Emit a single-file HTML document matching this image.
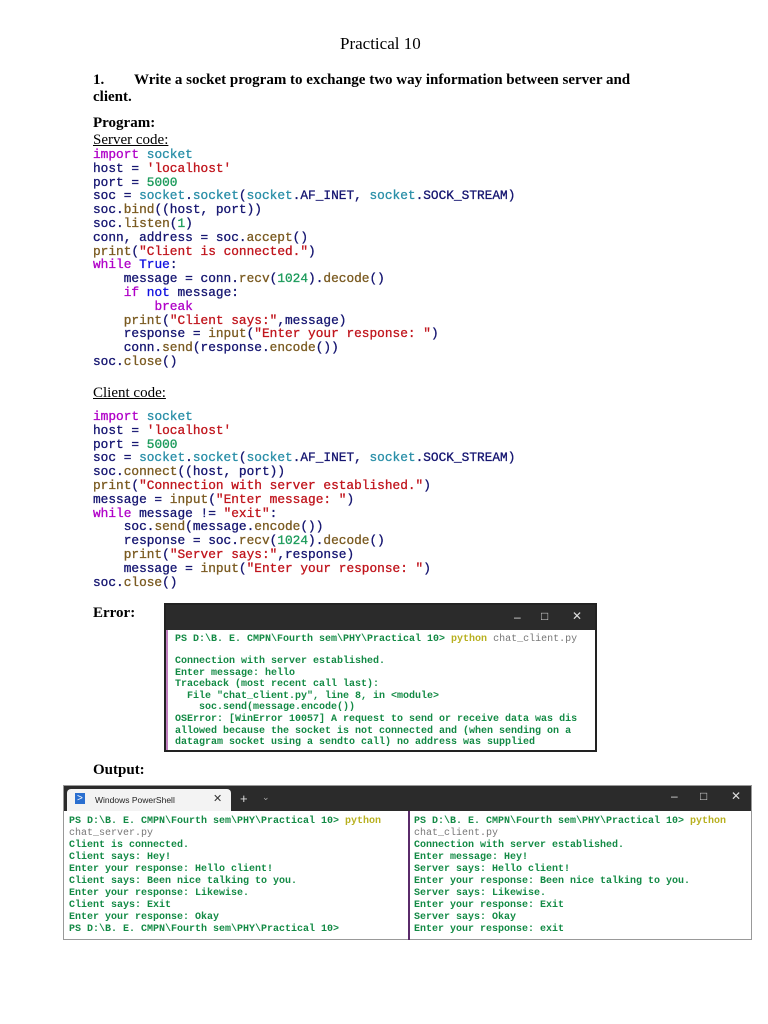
<!DOCTYPE html>
<html><head><meta charset="utf-8"><style>
body{margin:0;background:#fff;width:768px;height:1024px;position:relative;font-family:"Liberation Serif",serif;color:#000;overflow:hidden}
.a{position:absolute;white-space:pre}
.code{position:absolute;left:93px;font-family:"Liberation Mono",monospace;font-size:12.8px;line-height:13.8px;white-space:pre;color:#141470;-webkit-text-stroke:0.3px currentColor}
.k{color:#b000c8}.m{color:#2a8fa8}.s{color:#c0141c}.n{color:#1a9a5a}.f{color:#7a5a20}.b{color:#1010e0}
.term{position:absolute;font-family:"Liberation Mono",monospace;font-size:10px;white-space:pre;color:#138a45;font-weight:bold}
.y{color:#b8b020}.g{color:#777;font-weight:normal}
</style></head><body>
<div class="a" style="left:340px;top:34px;font-size:17px">Practical 10</div>
<div class="a" style="left:93px;top:72px;font-size:15px;font-weight:bold">1.        Write a socket program to exchange two way information between server and</div>
<div class="a" style="left:93px;top:89px;font-size:15px;font-weight:bold">client.</div>
<div class="a" style="left:93px;top:115px;font-size:15px;font-weight:bold">Program:</div>
<div class="a" style="left:93px;top:132px;font-size:15px;text-decoration:underline">Server code:</div>
<div class="code" style="top:148px"><span class="k">import</span> <span class="m">socket</span>
host = <span class="s">'localhost'</span>
port = <span class="n">5000</span>
soc = <span class="m">socket</span>.<span class="m">socket</span>(<span class="m">socket</span>.AF_INET, <span class="m">socket</span>.SOCK_STREAM)
soc.<span class="f">bind</span>((host, port))
soc.<span class="f">listen</span>(<span class="n">1</span>)
conn, address = soc.<span class="f">accept</span>()
<span class="f">print</span>(<span class="s">"Client is connected."</span>)
<span class="k">while</span> <span class="b">True</span>:
    message = conn.<span class="f">recv</span>(<span class="n">1024</span>).<span class="f">decode</span>()
    <span class="k">if</span> <span class="b">not</span> message:
        <span class="k">break</span>
    <span class="f">print</span>(<span class="s">"Client says:"</span>,message)
    response = <span class="f">input</span>(<span class="s">"Enter your response: "</span>)
    conn.<span class="f">send</span>(response.<span class="f">encode</span>())
soc.<span class="f">close</span>()</div>
<div class="a" style="left:93px;top:385px;font-size:15px;text-decoration:underline">Client code:</div>
<div class="code" style="top:410px"><span class="k">import</span> <span class="m">socket</span>
host = <span class="s">'localhost'</span>
port = <span class="n">5000</span>
soc = <span class="m">socket</span>.<span class="m">socket</span>(<span class="m">socket</span>.AF_INET, <span class="m">socket</span>.SOCK_STREAM)
soc.<span class="f">connect</span>((host, port))
<span class="f">print</span>(<span class="s">"Connection with server established."</span>)
message = <span class="f">input</span>(<span class="s">"Enter message: "</span>)
<span class="k">while</span> message != <span class="s">"exit"</span>:
    soc.<span class="f">send</span>(message.<span class="f">encode</span>())
    response = soc.<span class="f">recv</span>(<span class="n">1024</span>).<span class="f">decode</span>()
    <span class="f">print</span>(<span class="s">"Server says:"</span>,response)
    message = <span class="f">input</span>(<span class="s">"Enter your response: "</span>)
soc.<span class="f">close</span>()</div>
<div class="a" style="left:93px;top:605px;font-size:15px;font-weight:bold">Error:</div>
<div style="position:absolute;left:164px;top:603px;width:433px;height:149px;background:#fff;border:2px solid #222;box-sizing:border-box">
<div style="height:25px;background:#2b2b2b;color:#ddd;font-family:'Liberation Sans',sans-serif;font-size:12px"><span class="a" style="left:348px;top:5px">–</span><span class="a" style="left:375px;top:4px">□</span><span class="a" style="left:406px;top:4px">✕</span></div>
<div style="position:absolute;left:0;top:25px;width:2px;height:120px;background:#c080c0"></div>
</div>
<div class="term" style="left:175px;top:634px;line-height:11.6px">PS D:\B. E. CMPN\Fourth sem\PHY\Practical 10&gt; <span class="y">python</span> <span class="g">chat_client.py</span></div>
<div class="term" style="left:175px;top:656px;line-height:11.6px">Connection with server established.
Enter message: hello
Traceback (most recent call last):
  File "chat_client.py", line 8, in &lt;module&gt;
    soc.send(message.encode())
OSError: [WinError 10057] A request to send or receive data was dis
allowed because the socket is not connected and (when sending on a
datagram socket using a sendto call) no address was supplied</div>
<div class="a" style="left:93px;top:762px;font-size:15px;font-weight:bold">Output:</div>
<div style="position:absolute;left:63px;top:785px;width:689px;height:155px;background:#fff;border:1px solid #999;box-sizing:border-box">
<div style="height:25px;background:#2b2b2b;position:relative;font-family:'Liberation Sans',sans-serif">
<div style="position:absolute;left:3px;top:3px;width:164px;height:22px;background:#f3f3f3;border-radius:4px 4px 0 0"><span class="a" style="left:8px;top:4px;font-size:10px;color:#fff;background:#2a6fd0;padding:0 2px">&gt;</span><span class="a" style="left:28px;top:6px;font-size:8.5px;color:#222">Windows PowerShell</span><span class="a" style="left:146px;top:3px;font-size:11px;color:#333">✕</span></div>
<span class="a" style="left:176px;top:5px;color:#ddd;font-size:13px">+</span><span class="a" style="left:198px;top:6px;color:#aaa;font-size:9px">⌄</span>
<span class="a" style="left:607px;top:3px;color:#ddd;font-size:12px">–</span><span class="a" style="left:636px;top:3px;color:#ddd;font-size:12px">□</span><span class="a" style="left:667px;top:3px;color:#ddd;font-size:12px">✕</span>
</div>
<div style="position:absolute;left:344px;top:25px;width:2px;height:129px;background:#5a2a6a"></div>
</div>
<div class="term" style="left:69px;top:816px;line-height:12px">PS D:\B. E. CMPN\Fourth sem\PHY\Practical 10&gt; <span class="y">python</span>
<span class="g">chat_server.py</span>
Client is connected.
Client says: Hey!
Enter your response: Hello client!
Client says: Been nice talking to you.
Enter your response: Likewise.
Client says: Exit
Enter your response: Okay
PS D:\B. E. CMPN\Fourth sem\PHY\Practical 10&gt;</div>
<div class="term" style="left:414px;top:816px;line-height:12px">PS D:\B. E. CMPN\Fourth sem\PHY\Practical 10&gt; <span class="y">python</span>
<span class="g">chat_client.py</span>
Connection with server established.
Enter message: Hey!
Server says: Hello client!
Enter your response: Been nice talking to you.
Server says: Likewise.
Enter your response: Exit
Server says: Okay
Enter your response: exit</div>
</body></html>
